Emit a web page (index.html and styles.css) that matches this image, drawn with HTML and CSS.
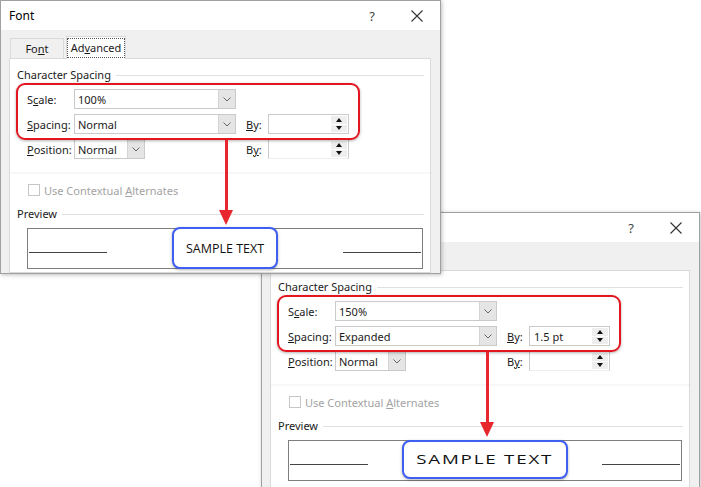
FILE: index.html
```html
<!DOCTYPE html>
<html lang="en">
<head>
  <meta charset="UTF-8" />
  <title>Font - Character Spacing</title>
  <link rel="stylesheet" href="styles.css">
</head>
<body>
<div class="desk">

  <!-- front window: 100% / Normal -->
  <div class="dlg front">
    <div class="titlebar">
      <span class="title">Font</span>
      <span class="help">?</span>
      <span class="close"><svg width="12" height="12" viewBox="0 0 12 12"><path d="M0.5 0.5 L11.5 11.5 M11.5 0.5 L0.5 11.5" stroke="#333" stroke-width="1.1" fill="none"/></svg></span>
    </div>
    <div class="body-area">
      <div class="tabs">
        <div class="tab">Fo<u>n</u>t</div>
        <div class="tab tab-on"><span class="focus">Ad<u>v</u>anced</span></div>
      </div>
      <div class="panel">
        <div class="group">Character Spacing</div>
        <div class="rows">
          <div class="row">
            <span class="lbl">S<u>c</u>ale:</span>
            <div class="combo"><span class="val">100%</span><span class="drop"><svg width="8" height="5" viewBox="0 0 8 5"><path d="M0.5 0.5 L4 4 L7.5 0.5" stroke="#666" fill="none"/></svg></span></div>
          </div>
          <div class="row">
            <span class="lbl"><u>S</u>pacing:</span>
            <div class="combo"><span class="val">Normal</span><span class="drop"><svg width="8" height="5" viewBox="0 0 8 5"><path d="M0.5 0.5 L4 4 L7.5 0.5" stroke="#666" fill="none"/></svg></span></div>
            <span class="by"><u>B</u>y:</span>
            <div class="spin"><span class="val"></span><span class="arrows"><i class="up"></i><i class="down"></i></span></div>
          </div>
          <div class="row">
            <span class="lbl"><u>P</u>osition:</span>
            <div class="combo short"><span class="val">Normal</span><span class="drop"><svg width="8" height="5" viewBox="0 0 8 5"><path d="M0.5 0.5 L4 4 L7.5 0.5" stroke="#666" fill="none"/></svg></span></div>
            <span class="by gap">B<u>y</u>:</span>
            <div class="spin faded"><span class="val"></span><span class="arrows"><i class="up"></i><i class="down"></i></span></div>
          </div>
        </div>
        <div class="check"><span class="box"></span><span>Use Contextual <u>A</u>lternates</span></div>
        <div class="group second">Preview</div>
        <div class="preview">
          <span class="line"></span>
          <span class="sample"><span>SAMPLE TEXT</span></span>
          <span class="line"></span>
        </div>
      </div>
    </div>
    <div class="seam"></div>
    <div class="mark"></div>
    <div class="arrow"></div>
  </div>

  <!-- back window: 150% / Expanded 1.5 pt -->
  <div class="dlg back">
    <div class="titlebar">
      <span class="title">Font</span>
      <span class="help">?</span>
      <span class="close"><svg width="12" height="12" viewBox="0 0 12 12"><path d="M0.5 0.5 L11.5 11.5 M11.5 0.5 L0.5 11.5" stroke="#333" stroke-width="1.1" fill="none"/></svg></span>
    </div>
    <div class="body-area">
      <div class="tabs">
        <div class="tab">Fo<u>n</u>t</div>
        <div class="tab tab-on"><span class="focus">Ad<u>v</u>anced</span></div>
      </div>
      <div class="panel">
        <div class="group">Character Spacing</div>
        <div class="rows">
          <div class="row">
            <span class="lbl">S<u>c</u>ale:</span>
            <div class="combo"><span class="val">150%</span><span class="drop"><svg width="8" height="5" viewBox="0 0 8 5"><path d="M0.5 0.5 L4 4 L7.5 0.5" stroke="#666" fill="none"/></svg></span></div>
          </div>
          <div class="row">
            <span class="lbl"><u>S</u>pacing:</span>
            <div class="combo"><span class="val">Expanded</span><span class="drop"><svg width="8" height="5" viewBox="0 0 8 5"><path d="M0.5 0.5 L4 4 L7.5 0.5" stroke="#666" fill="none"/></svg></span></div>
            <span class="by"><u>B</u>y:</span>
            <div class="spin"><span class="val">1.5 pt</span><span class="arrows"><i class="up"></i><i class="down"></i></span></div>
          </div>
          <div class="row">
            <span class="lbl"><u>P</u>osition:</span>
            <div class="combo short"><span class="val">Normal</span><span class="drop"><svg width="8" height="5" viewBox="0 0 8 5"><path d="M0.5 0.5 L4 4 L7.5 0.5" stroke="#666" fill="none"/></svg></span></div>
            <span class="by gap">B<u>y</u>:</span>
            <div class="spin faded"><span class="val"></span><span class="arrows"><i class="up"></i><i class="down"></i></span></div>
          </div>
        </div>
        <div class="check"><span class="box"></span><span>Use Contextual <u>A</u>lternates</span></div>
        <div class="group second">Preview</div>
        <div class="preview">
          <span class="line"></span>
          <span class="sample"><span>SAMPLE TEXT</span></span>
          <span class="line"></span>
        </div>
      </div>
    </div>
    <div class="seam"></div>
    <div class="mark"></div>
    <div class="arrow"></div>
  </div>

</div>
</body>
</html>
```

FILE: styles.css
```css
* {
  box-sizing: border-box;
}

body {
  margin: 0;
  background: #fff;
  font-family: "Noto Sans", "Open Sans", sans-serif;
  font-size: 11px;
  color: #1a1a1a;
}

u {
  text-underline-offset: 1px;
}

.desk {
  position: relative;
  width: 701px;
  height: 487px;
  overflow: hidden;
}

/* windows on the desktop */
.dlg {
  position: absolute;
  display: flex;
  flex-direction: column;
  border: 1px solid #a0a0a0;
  background: #f0f0f0;
  overflow: hidden;
  box-shadow: 1px 1px 4px rgba(0,0,0,0.25);
}

.front {
  left: 0;
  top: 0;
  width: 441px;
  height: 274px;
  z-index: 2;
}

.back {
  left: 261px;
  top: 212px;
  width: 439px;
  height: 290px;
  z-index: 1;
}

.titlebar {
  flex: none;
  height: 29px;
  background: #fff;
  display: flex;
  align-items: center;
  padding-left: 8px;
}

.title {
  flex: 1;
  font-size: 12px;
  color: #000;
}

.help {
  width: 44px;
  text-align: center;
  font-size: 13px;
  color: #444;
}

.close {
  width: 46px;
  display: flex;
  justify-content: center;
  align-items: center;
}

.body-area {
  flex: 1;
  display: flex;
  flex-direction: column;
  padding: 6px 9px 0 8px;
}

/* tabs */
.tabs {
  display: flex;
  align-items: flex-end;
  height: 22px;
  padding-left: 1px;
}

.tab {
  width: 54px;
  height: 20px;
  border: 1px solid #dadada;
  border-bottom: none;
  display: flex;
  align-items: center;
  justify-content: center;
}

.tab-on {
  width: 60px;
  height: 23px;
  margin-left: 2px;
  margin-bottom: -1px;
  background: #fff;
  position: relative;
  z-index: 1;
}

.focus {
  border: 1px dotted #555;
  padding: 1px 3px 2px;
}

.panel {
  flex: 1;
  background: #fff;
  border: 1px solid #dadada;
  padding: 9px 6px 0 7px;
}

.group {
  display: flex;
  align-items: center;
  gap: 5px;
  height: 14px;
  line-height: 14px;
}

.group::after {
  content: "";
  flex: 1;
  height: 1px;
  background: #e0e0e0;
}

.group.second {
  margin-top: 11px;
}

/* rows of fields */
.rows {
  margin-top: 7px;
  padding-left: 10px;
  display: flex;
  flex-direction: column;
  gap: 5px;
}

.row {
  display: flex;
  align-items: center;
  height: 20px;
}

.lbl {
  width: 47px;
}

.combo {
  width: 162px;
  height: 20px;
  border: 1px solid #cacaca;
  display: flex;
  align-items: center;
  padding-left: 3px;
}

.combo.short {
  width: 71px;
}

.val {
  flex: 1;
}

.drop {
  width: 17px;
  align-self: stretch;
  background: #e5e5e5;
  border-left: 1px solid #d4d4d4;
  display: flex;
  align-items: center;
  justify-content: center;
}

.by {
  width: 22px;
  margin-left: 10px;
}

.by.gap {
  margin-left: 101px;
}

.spin {
  width: 81px;
  height: 20px;
  border: 1px solid #cacaca;
  display: flex;
  align-items: center;
  padding-left: 4px;
}

.spin.faded {
  border-bottom-color: #eee;
}

.arrows {
  width: 16px;
  align-self: stretch;
  margin: 1px 1px 1px 0;
  display: flex;
  flex-direction: column;
  gap: 1px;
}

.arrows i {
  flex: 1;
  background: #eeeeee;
  display: flex;
  align-items: center;
  justify-content: center;
}

.arrows i::after {
  content: "";
  border-left: 3.5px solid transparent;
  border-right: 3.5px solid transparent;
}

.arrows .up::after {
  border-bottom: 4px solid #111;
}

.arrows .down::after {
  border-top: 4px solid #111;
}

.check {
  margin-top: 25px;
  padding-left: 11px;
  height: 12px;
  display: flex;
  align-items: center;
  gap: 4px;
  color: #a3a3a3;
}

.check .box {
  width: 12px;
  height: 12px;
  border: 1px solid #c6c6c6;
}

/* preview */
.preview {
  margin: 7px 1px 0 10px;
  height: 41px;
  border: 1px solid #7e7e7e;
  padding: 0 1px;
  display: flex;
  justify-content: space-between;
  align-items: flex-start;
}

.line {
  width: 78px;
  height: 1px;
  margin-top: 23px;
  background: #444;
}

.sample {
  width: 106px;
  height: 42px;
  margin-top: -2px;
  border: 2.5px solid #3f5ff2;
  border-radius: 8px;
  background: #fff;
  box-shadow: 0 1px 3px rgba(0,0,0,0.3);
  display: flex;
  align-items: center;
  justify-content: center;
  font-family: "Open Sans", sans-serif;
  font-size: 12.5px;
  color: #111;
  position: relative;
  z-index: 2;
}

.back .sample {
  width: 166px;
  height: 39px;
  margin-top: -1px;
}

.back .sample span {
  display: inline-block;
  transform: scaleX(1.5);
  letter-spacing: 1.2px;
}

/* the seam where the screenshot was cut */
.seam {
  position: absolute;
  left: 9px;
  right: 9px;
  top: 171px;
  height: 2px;
  background: rgba(0,0,0,0.03);
}

/* red callout */
.mark {
  position: absolute;
  left: 15px;
  top: 82px;
  width: 344px;
  height: 57px;
  border: 2.5px solid #e3161f;
  border-radius: 9px;
  box-shadow: 0 1px 3px rgba(0,0,0,0.3);
  z-index: 3;
}

.arrow {
  position: absolute;
  left: 224px;
  top: 139px;
  width: 3px;
  height: 71px;
  background: #e8262e;
  z-index: 3;
}

.arrow::after {
  content: "";
  position: absolute;
  left: -6px;
  top: 70px;
  border-left: 7.5px solid transparent;
  border-right: 7.5px solid transparent;
  border-top: 15px solid #e8262e;
}
```
